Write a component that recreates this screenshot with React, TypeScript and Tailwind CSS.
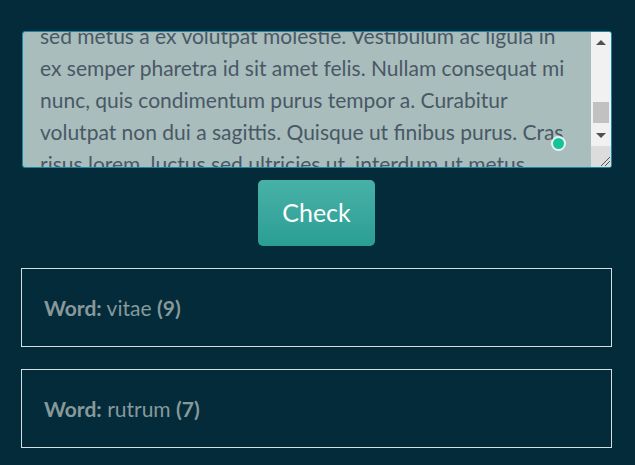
import React, { useEffect, useRef } from 'react';

const lines = [
    'Lorem ipsum dolor sit amet, consectetur adipiscing elit.',
    'Praesent vitae nibh vel lectus rutrum dictum. Donec a',
    'tellus vitae mauris rutrum tincidunt. Aliquam erat',
    'volutpat. Integer vitae lacus eget velit rutrum posuere',
    'sit amet in nisl. Sed vitae justo id sem porta blandit.',
    'Morbi rutrum, augue vitae porttitor aliquet, lacus arcu',
    'faucibus risus, vitae rutrum mauris neque vel lorem.',
    'Phasellus vitae odio vitae nunc rutrum faucibus. Etiam',
    'rutrum orci vitae tortor pulvinar, non rutrum lectus',
    'placerat. Nam vitae dolor ac augue efficitur sodales.',
    'Vivamus vitae elit sed mi ultricies tempus. Suspendisse',
    'potenti. Fusce vitae arcu sit amet lorem dapibus luctus',
    'sed metus a ex volutpat molestie. Vestibulum ac ligula in',
    'ex semper pharetra id sit amet felis. Nullam consequat mi',
    'nunc, quis condimentum purus tempor a. Curabitur',
    'volutpat non dui a sagittis. Quisque ut finibus purus. Cras',
    'risus lorem, luctus sed ultricies ut, interdum ut metus.',
];

const words = [
    { word: 'vitae', count: 9 },
    { word: 'rutrum', count: 7 },
];

function Arrow({ up }: { up?: boolean }) {
    return (
        <div className="flex h-[21px] items-center justify-center">
            <span
                className={
                    up
                        ? 'h-0 w-0 border-x-[5px] border-b-[5px] border-x-transparent border-b-[#505050]'
                        : 'h-0 w-0 border-x-[5px] border-t-[5px] border-x-transparent border-t-[#505050]'
                }
            />
        </div>
    );
}

export default function App() {
    const ref = useRef<HTMLTextAreaElement>(null);

    useEffect(() => {
        if (ref.current) ref.current.scrollTop = 412;
    }, []);

    return (
        <div
            className="min-h-[465px] w-full bg-[#032b39] pl-[21px] pr-[23px] pt-[31px] pb-4"
            style={{ fontFamily: 'Lato, "Open Sans", sans-serif' }}
        >
            {/* Text input with scrollbar */}
            <div className="relative ml-px flex h-[137px] overflow-hidden rounded-[3px] border border-[#1789a8] bg-[#a9bdbc]">
                <textarea
                    ref={ref}
                    wrap="off"
                    defaultValue={lines.join('\n')}
                    className="block h-full flex-1 resize-none overflow-hidden bg-transparent px-[17px] py-4 text-[21px] leading-[32px] text-[#4a5866] outline-none"
                    style={{ fontFamily: 'Lato, sans-serif' }}
                />
                <div className="flex w-[20px] flex-col bg-[#f1f1f1]">
                    <Arrow up />
                    <div className="flex-1 px-[2px] pt-[49px]">
                        <div className="h-[21px] bg-[#c1c1c1]" />
                    </div>
                    <Arrow />
                    <div className="relative h-[21px] bg-[#dcdcdc]">
                        <svg className="absolute right-[1px] bottom-[1px]" width="10" height="10" viewBox="0 0 10 10">
                            <path d="M10 1 L1 10 M10 5 L5 10" stroke="#555" strokeWidth="1" />
                        </svg>
                    </div>
                </div>
                <span className="absolute left-[528px] top-[104px] h-[15px] w-[15px] rounded-full border-2 border-[#e8f4f1] bg-[#15c39a]" />
            </div>

            {/* Check button */}
            <div className="mt-3 flex justify-center">
                <button className="h-[66px] w-[117px] rounded-[5px] bg-gradient-to-b from-[#48b1a7] to-[#2a9e94] text-[25px] text-white">
                    Check
                </button>
            </div>

            {/* Results */}
            <div className="mt-[22px] flex flex-col gap-[22px]">
                {words.map((w) => (
                    <div
                        key={w.word}
                        className="flex h-[79px] items-center border border-[#d3dfe0] px-[22px] text-[21px] text-[#87999b]"
                    >
                        <span>
                            <b className="font-bold">Word:</b> {w.word}{' '}
                            <b className="font-bold">({w.count})</b>
                        </span>
                    </div>
                ))}
            </div>
        </div>
    );
}
